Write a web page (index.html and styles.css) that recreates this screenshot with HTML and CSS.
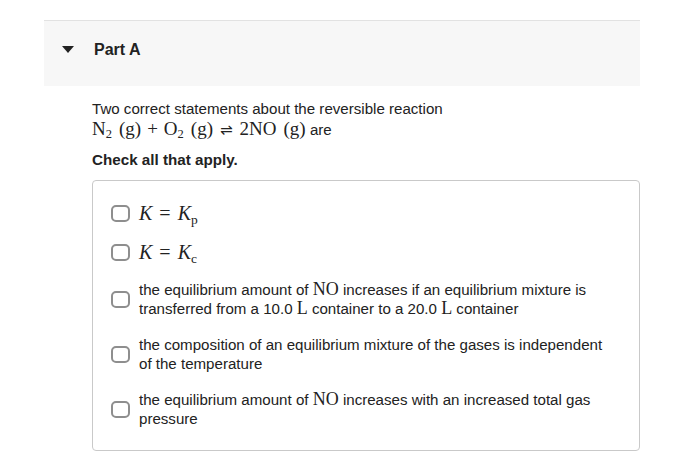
FILE: index.html
```html
<!DOCTYPE html>
<html>
<head>
<meta charset="utf-8">
<link rel="stylesheet" href="styles.css">
</head>
<body>
<div class="page">
  <div class="part-header">
    <span class="caret"></span>
    <span class="part-title">Part A</span>
  </div>
  <div class="question">
    <div class="prompt">Two correct statements about the reversible reaction</div>
    <div class="prompt eq"><span class="m eqm">N<sub>2</sub><span class="sp"></span>(g)<span class="op">+</span>O<sub>2</sub><span class="sp"></span>(g)<span class="op rev">&#8652;</span>2NO<span class="sp"></span>(g)</span> are</div>
    <div class="instr">Check all that apply.</div>
    <div class="choices">
      <label class="choice single"><span class="cb"></span><span class="txt"><span class="m mk"><i>K</i><span class="op">=</span><i>K</i><sub>p</sub></span></span></label>
      <label class="choice single"><span class="cb"></span><span class="txt"><span class="m mk"><i>K</i><span class="op">=</span><i>K</i><sub>c</sub></span></span></label>
      <label class="choice"><span class="cb"></span><span class="txt">the equilibrium amount of <span class="m">NO</span> increases if an equilibrium mixture is transferred from a 10.0 <span class="m">L</span> container to a 20.0 <span class="m">L</span> container</span></label>
      <label class="choice"><span class="cb"></span><span class="txt">the composition of an equilibrium mixture of the gases is independent of the temperature</span></label>
      <label class="choice"><span class="cb"></span><span class="txt">the equilibrium amount of <span class="m">NO</span> increases with an increased total gas pressure</span></label>
    </div>
  </div>
</div>
</body>
</html>
```
FILE: styles.css
```css
html, body { margin: 0; padding: 0; background: #fff; }
body { font-family: "Liberation Sans", Arial, sans-serif; color: #222; }
.page { padding-top: 20px; }
.part-header {
  margin-left: 44px;
  width: 596px;
  height: 65px;
  border-top: 1px solid #e2e2e2;
  background: #f7f7f7;
  display: flex;
  align-items: center;
}
.caret {
  width: 0; height: 0;
  margin-left: 18px;
  margin-right: 20px;
  border-left: 6px solid transparent;
  border-right: 6px solid transparent;
  border-top: 7px solid #222;
  margin-top: -8px;
}
.part-title { font-weight: bold; font-size: 16px; color: #222; margin-top: -8px; }
.question { padding-left: 92px; padding-top: 13px; width: 548px; }
.prompt { font-size: 15.1px; line-height: 20px; color: #222; }
.eq { line-height: 20px; }
.m { font-family: "Liberation Serif", "Times New Roman", serif; font-size: 18px; line-height: 1; }
.m sub { font-size: 12.5px; vertical-align: -3px; line-height: 0; }
.eqm { font-size: 19px; }
.sp { display: inline-block; width: 7px; }
.op { display: inline-block; margin: 0 6px; }
.rev { font-family: "DejaVu Sans", sans-serif; font-size: 15px; margin: 0 7px; }
.instr { font-weight: bold; font-size: 15.2px; margin-top: 10px; line-height: 20px; }
.choices {
  margin-top: 10px;
  border: 1px solid #c9c9c9;
  border-radius: 4px;
  padding: 21px 30px 22px 18px;
  display: flex;
  flex-direction: column;
  gap: 17px;
}
.choice { display: flex; align-items: center; gap: 9px; font-size: 15.1px; line-height: 19px; color: #222; }
.choice.single { height: 22px; }
.cb {
  flex: none;
  width: 15px; height: 13px;
  border: 2px solid #8e8e8e;
  border-radius: 5px;
  background: #fff;
}
.txt { display: block; }
.mk { font-size: 20px; }
.mk .op { margin: 0 7px; }
.mk sub { font-size: 13.5px; vertical-align: -4px; }
```
